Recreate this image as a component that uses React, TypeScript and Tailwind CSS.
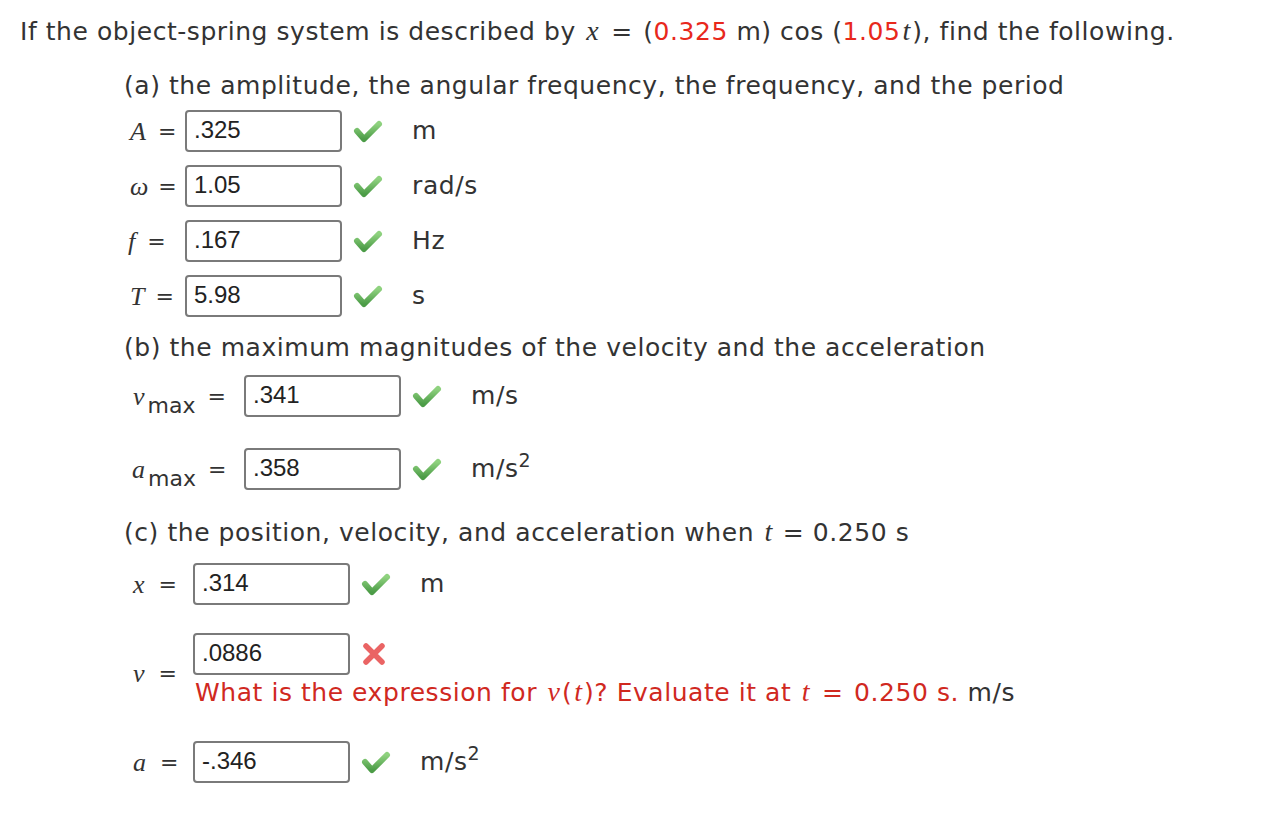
import React from 'react';

const sans = "font-['DejaVu_Sans',Verdana,sans-serif]";
const serif = "font-['Liberation_Serif','Times_New_Roman',serif] italic";
const body = 'text-[25px] tracking-[0.55px] leading-[32px] whitespace-nowrap';

const CheckMark = () => (
  <svg width="32" height="28" viewBox="0 0 32 28" className="shrink-0">
    <defs>
      <linearGradient id="okg" x1="0" y1="0" x2="0" y2="1">
        <stop offset="0" stopColor="#8fd27f" />
        <stop offset="1" stopColor="#4c9c47" />
      </linearGradient>
    </defs>
    <path d="M5 14 L12 22 L27 7" fill="none" stroke="url(#okg)" strokeWidth="6" strokeLinecap="round" strokeLinejoin="round" />
  </svg>
);

const CrossMark = () => (
  <svg width="24" height="24" viewBox="0 0 24 24" className="shrink-0">
    <path d="M4 4 L20 20 M20 4 L4 20" fill="none" stroke="#ea6464" strokeWidth="5.5" strokeLinecap="round" />
  </svg>
);

const Box = ({ value }: { value: string }) => (
  <div className="w-[157px] h-[42px] shrink-0 rounded-[4px] border-2 border-[#7a7a7a] bg-white pl-[7px] flex items-center font-['Liberation_Sans',Arial,sans-serif] text-[24px] text-[#222] leading-none pb-[2px]">
    {value}
  </div>
);

// math letter used as a row label
const Var = ({ children }: { children: React.ReactNode }) => (
  <span className={`${serif} text-[26px] tracking-normal`}>{children}</span>
);

// math letter inside running text
const MathIn = ({ children }: { children: React.ReactNode }) => (
  <span className={`${serif} text-[28px] leading-none tracking-normal mx-[2px]`}>{children}</span>
);

const Eq = ({ className = '' }: { className?: string }) => <span className={`${sans} text-[22px] ${className}`}>=</span>;

const Unit = ({ children }: { children: React.ReactNode }) => (
  <span className={`${sans} text-[25px] tracking-[0.6px] text-[#333]`}>{children}</span>
);

const MS2 = () => (
  <Unit>
    m/s<sup className="text-[19px] -top-[10px]">2</sup>
  </Unit>
);

type RowProps = {
  label: React.ReactNode;
  labelW: string;
  value: string;
  unit: React.ReactNode;
};

const Row = ({ label, labelW, value, unit }: RowProps) => (
  <div className="flex items-center h-[42px]">
    <div className={`${labelW} shrink-0 flex items-center text-[#333]`}>{label}</div>
    <Box value={value} />
    <div className="ml-[10px] w-[32px] flex items-center">
      <CheckMark />
    </div>
    <div className="ml-[28px]">{unit}</div>
  </div>
);

export default function App() {
  return (
    <div className={`${sans} bg-white w-[1280px] h-[816px] text-[#333] pl-[20px] pt-[16px]`}>
      {/* question stem */}
      <div className={`h-[32px] ${body}`}>
        If the object-spring system is described by <MathIn>x</MathIn> <span className="mx-[2px]">=</span> (
        <span className="text-[#e8281c]">0.325</span> m) cos (<span className="text-[#e8281c]">1.05</span>
        <MathIn>t</MathIn>), find the following.
      </div>

      <div className="ml-[104px]">
        {/* (a) */}
        <div className={`mt-[22px] ${body}`}>
          (a) the amplitude, the angular frequency, the frequency, and the period
        </div>
        <div className="mt-[8px] flex flex-col gap-[13px]">
          <Row
            labelW="w-[61px] pl-[6px]"
            label={<><Var>A</Var><Eq className="ml-[12px]" /></>}
            value=".325"
            unit={<Unit>m</Unit>}
          />
          <Row
            labelW="w-[61px] pl-[6px]"
            label={<><Var>ω</Var><Eq className="ml-[10px]" /></>}
            value="1.05"
            unit={<Unit>rad/s</Unit>}
          />
          <Row
            labelW="w-[61px] pl-[4px]"
            label={<><Var>f</Var><Eq className="ml-[12px]" /></>}
            value=".167"
            unit={<Unit>Hz</Unit>}
          />
          <Row
            labelW="w-[61px] pl-[6px]"
            label={<><Var>T</Var><Eq className="ml-[11px]" /></>}
            value="5.98"
            unit={<Unit>s</Unit>}
          />
        </div>

        {/* (b) */}
        <div className={`mt-[15px] ${body}`}>
          (b) the maximum magnitudes of the velocity and the acceleration
        </div>
        <div className="mt-[11px] flex flex-col gap-[31px]">
          <Row
            labelW="w-[120px] pl-[9px]"
            label={
              <>
                <Var>v</Var>
                <span className="text-[22px] relative top-[9px] ml-[3px]">max</span>
                <Eq className="ml-[12px]" />
              </>
            }
            value=".341"
            unit={<Unit>m/s</Unit>}
          />
          <Row
            labelW="w-[120px] pl-[8px]"
            label={
              <>
                <Var>a</Var>
                <span className="text-[22px] relative top-[9px] ml-[3px]">max</span>
                <Eq className="ml-[12px]" />
              </>
            }
            value=".358"
            unit={<MS2 />}
          />
        </div>

        {/* (c) */}
        <div className={`mt-[27px] h-[32px] ${body}`}>
          (c) the position, velocity, and acceleration when <MathIn>t</MathIn> = 0.250 s
        </div>
        <div className="mt-[14px]">
          <Row
            labelW="w-[69px] pl-[9px]"
            label={<><Var>x</Var><Eq className="ml-[14px]" /></>}
            value=".314"
            unit={<Unit>m</Unit>}
          />

          <div className="mt-[28px] flex items-center">
            <div className="w-[69px] pl-[9px] shrink-0 flex items-center pt-[4px]">
              <Var>v</Var>
              <Eq className="ml-[14px]" />
            </div>
            <div>
              <div className="flex items-center">
                <Box value=".0886" />
                <div className="ml-[12px]">
                  <CrossMark />
                </div>
              </div>
              <div className={`mt-[2px] pl-[2px] h-[32px] ${body}`}>
                <span className="text-[#d0291f]">
                  What is the expression for <MathIn>v</MathIn>(<MathIn>t</MathIn>)? Evaluate it at{' '}
                  <MathIn>t</MathIn> <span className="mx-[2px]">=</span> 0.250 s.
                </span>{' '}
                m/s
              </div>
            </div>
          </div>

          <div className="mt-[32px]">
            <Row
              labelW="w-[69px] pl-[9px]"
              label={<><Var>a</Var><Eq className="ml-[14px]" /></>}
              value="-.346"
              unit={<MS2 />}
            />
          </div>
        </div>
      </div>
    </div>
  );
}
